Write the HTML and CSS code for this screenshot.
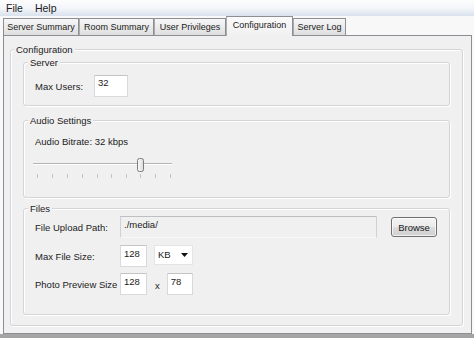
FILE: index.html
```html
<!DOCTYPE html>
<html lang="en">
<head>
  <meta charset="UTF-8">
  <title>Server Configuration</title>
  <link rel="stylesheet" href="styles.css">
</head>
<body>
  <div class="window">
    <div class="menubar">
      <span class="menu-item">File</span>
      <span class="menu-item">Help</span>
    </div>
    <div class="tabstrip">
      <div class="tab tab-summary">Server Summary</div>
      <div class="tab tab-rooms">Room Summary</div>
      <div class="tab tab-privileges">User Privileges</div>
      <div class="tab tab-config active">Configuration</div>
      <div class="tab tab-log">Server Log</div>
    </div>
    <div class="panel">
      <fieldset class="group group-main">
        <legend>Configuration</legend>

        <fieldset class="group group-server">
          <legend>Server</legend>
          <div class="row">
            <label class="lbl lbl-users">Max Users:</label>
            <input class="textbox tb-users" value="32">
          </div>
        </fieldset>

        <fieldset class="group group-audio">
          <legend>Audio Settings</legend>
          <div class="lbl">Audio Bitrate: 32 kbps</div>
          <svg class="slider" width="145" height="25" viewBox="0 0 145 25">
            <line x1="2" y1="8.5" x2="141" y2="8.5" stroke="#b4b4b4"/>
            <line x1="2" y1="9.5" x2="141" y2="9.5" stroke="#ffffff"/>
            <path d="M6.5 19v4M21.5 19v4M36.5 19v4M51.5 19v4M66.5 19v4M80.5 19v4M95.5 19v4M109.5 19v4M124.5 19v4M139.5 19v4" stroke="#c4c4c4"/>
            <defs>
              <linearGradient id="thumb" x1="0" y1="0" x2="1" y2="0">
                <stop offset="0" stop-color="#fbfbfb"/>
                <stop offset="1" stop-color="#dcdcdc"/>
              </linearGradient>
            </defs>
            <rect x="106.5" y="3.5" width="6" height="13" rx="2" fill="url(#thumb)" stroke="#7c7c7c"/>
          </svg>
        </fieldset>

        <fieldset class="group group-files">
          <legend>Files</legend>
          <div class="row">
            <label class="lbl lbl-files">File Upload Path:</label>
            <input class="textbox tb-path" value="./media/" readonly>
            <button class="btn">Browse</button>
          </div>
          <div class="row row-size">
            <label class="lbl lbl-files">Max File Size:</label>
            <input class="textbox tb-small" value="128">
            <div class="combo">
              <span>KB</span>
              <svg width="7" height="4" viewBox="0 0 7 4"><path d="M0 0h7L3.5 4z" fill="#111"/></svg>
            </div>
          </div>
          <div class="row row-preview">
            <label class="lbl lbl-files">Photo Preview Size</label>
            <input class="textbox tb-small" value="128">
            <span class="times">x</span>
            <input class="textbox tb-height" value="78">
          </div>
        </fieldset>
      </fieldset>
    </div>
    <div class="bottom-edge"></div>
  </div>
</body>
</html>
```

FILE: styles.css
```css
/* Base */
body {
  margin: 0;
  background: #f8f8f8;
  font-family: "Liberation Sans", Arial, sans-serif;
  font-size: 9.5px;
  color: #1b1b1b;
}

.window {
  width: 474px;
  height: 338px;
  display: flex;
  flex-direction: column;
  overflow: hidden;
}

/* Menu bar */
.menubar {
  height: 16px;
  line-height: 16px;
  padding-left: 6px;
  display: flex;
  font-size: 10.5px;
  background: linear-gradient(#fdfdfe, #f2f5f9 55%, #d9e1ec);
}

.menu-item {
  margin-right: 12px;
}

/* Tabs */
.tabstrip {
  height: 19px;
  display: flex;
  align-items: flex-end;
  padding-left: 3px;
  font-size: 9px;
}

.tab {
  box-sizing: border-box;
  height: 17px;
  line-height: 16px;
  border: 1px solid #8c8e94;
  border-bottom: 0;
  background: linear-gradient(#f6f6f6, #ebebeb 50%, #dedede);
  text-align: center;
  white-space: nowrap;
}

.tab + .tab {
  border-left-color: #a9abb0;
}

.tab-summary { width: 76px; }
.tab-rooms { width: 75px; }
.tab-privileges { width: 72px; }
.tab-config { width: 67px; }
.tab-log { width: 53px; }

.tab.active {
  position: relative;
  z-index: 1;
  height: 20px;
  line-height: 17px;
  margin-bottom: -1px;
  background: linear-gradient(#fbfbfb, #f0f0f0);
}

/* Tab page */
.panel {
  box-sizing: border-box;
  width: 469px;
  height: 299px;
  margin-left: 3px;
  padding-top: 7px;
  border: 1px solid #8c8e94;
  background: #f0f0f0;
}

.bottom-edge {
  height: 4px;
  background: #a4a4a4;
}

/* Group boxes */
.group {
  margin: 0;
  min-width: 0;
  border: 1px solid #d3d5d8;
  border-radius: 3px;
  box-shadow: inset 1px 1px 0 #fff, 1px 1px 0 #fff;
  padding: 0 11px;
}

.group legend {
  padding: 0 2px;
  margin-left: -7px;
  line-height: 13px;
  background: #f0f0f0;
}

.group-main {
  margin: 0 8px 0 6px;
  padding: 0 12px 10px;
}

.group-main > legend {
  margin-left: -9px;
}

.group-server {
  padding-top: 6px;
  padding-bottom: 8px;
}

.group-audio {
  margin-top: 8px;
  padding-top: 8px;
  padding-bottom: 17px;
}

.group-files {
  margin-top: 4px;
  padding-top: 1px;
  padding-bottom: 19px;
}

/* Rows and labels */
.row {
  display: flex;
  align-items: center;
  height: 22px;
}

.row-size {
  margin-top: 7px;
}

.row-preview {
  margin-top: 6px;
}

.lbl {
  line-height: 13px;
  white-space: nowrap;
}

.lbl-users {
  width: 59px;
}

.lbl-files {
  width: 85px;
}

/* Slider */
.slider {
  display: block;
  margin: 7px 0 0 -4px;
}

/* Inputs */
.textbox {
  box-sizing: border-box;
  height: 22px;
  margin: 0;
  padding: 0 0 7px 3px;
  border: 1px solid #d7d9dd;
  border-top-color: #c2c4c8;
  background: #fff;
  font: inherit;
  line-height: 13px;
  color: #1b1b1b;
  outline: none;
}

.tb-users {
  width: 34px;
}

.tb-path {
  width: 257px;
  padding-top: 2px;
  background: #f0f0f0;
  border-color: #cfd1d4;
  border-top-color: #bdbfc3;
  border-bottom-color: #f8f8f8;
}

.tb-small {
  width: 27px;
  padding-top: 2px;
}

.tb-height {
  width: 26px;
  padding-top: 2px;
  margin-left: 7px;
}

.btn {
  box-sizing: border-box;
  width: 46px;
  height: 20px;
  margin-left: 14px;
  padding: 0;
  border: 1px solid #707070;
  border-radius: 3px;
  background: linear-gradient(#f4f4f4, #ebebeb 50%, #dddddd 51%, #cfcfcf);
  box-shadow: inset 0 0 0 1px rgba(255, 255, 255, 0.7);
  font: inherit;
  color: #1b1b1b;
}

.combo {
  box-sizing: border-box;
  display: flex;
  align-items: center;
  justify-content: space-between;
  align-self: flex-start;
  width: 39px;
  height: 20px;
  margin-left: 7px;
  padding: 0 4px 1px 3px;
  background: #fff;
  border: 1px solid #e4e4e4;
}

.times {
  align-self: flex-end;
  margin: 0 0 3px 8px;
  line-height: 13px;
}
```
